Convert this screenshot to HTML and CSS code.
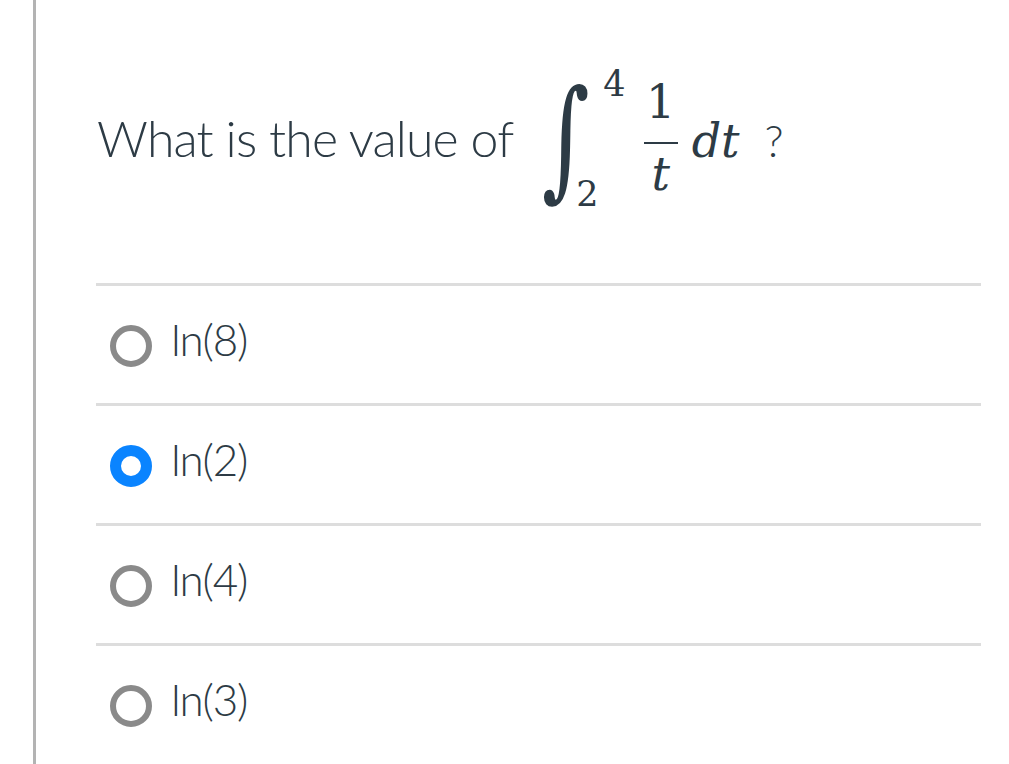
FILE: index.html
```html
<!DOCTYPE html>
<html lang="en">
<head>
<meta charset="utf-8">
<title>Quiz question</title>
<link rel="stylesheet" href="styles.css">
</head>
<body>
<div class="page">
  <div class="content">
    <div class="question">
      <span class="qtext">What is the value of</span>
      <span class="math">
        <span class="int-group">
          <span class="int-sign">∫</span>
          <span class="limits">
            <span class="sup">4</span>
            <span class="sub">2</span>
          </span>
        </span>
        <span class="frac">
          <span class="num">1</span>
          <span class="bar"></span>
          <span class="den">t</span>
        </span>
        <span class="dt">dt</span>
      </span>
      <span class="qmark">?</span>
    </div>
    <div class="answers">
      <label class="answer"><input type="radio" name="q1" class="radio"><span class="label">ln(8)</span></label>
      <label class="answer"><input type="radio" name="q1" class="radio" checked><span class="label">ln(2)</span></label>
      <label class="answer"><input type="radio" name="q1" class="radio"><span class="label">ln(4)</span></label>
      <label class="answer last"><input type="radio" name="q1" class="radio"><span class="label">ln(3)</span></label>
    </div>
  </div>
</div>
</body>
</html>
```

FILE: styles.css
```css
html, body {
  margin: 0;
  padding: 0;
  background: #ffffff;
}
body {
  font-family: Lato, "Open Sans", sans-serif;
  color: #2d3b45;
}
.page {
  margin-left: 33px;
  border-left: 3px solid #b3b3b3;
  min-height: 764px;
  box-sizing: border-box;
  padding-left: 60px;
  padding-right: 28px;
}
.question {
  display: flex;
  align-items: flex-start;
  height: 283px;
  padding-top: 60px;
  box-sizing: border-box;
}
.qtext {
  font-size: 50px;
  font-weight: 300;
  letter-spacing: -0.85px;
  line-height: 60px;
  margin-top: 48px;
  margin-left: 1px;
  white-space: nowrap;
}
.math {
  display: flex;
  align-items: flex-start;
  margin-left: 23px;
  font-family: "DejaVu Serif", "Liberation Serif", serif;
  color: #2d3b45;
}
.int-group {
  display: flex;
  align-items: flex-start;
}
.int-sign {
  font-family: "DejaVu Serif", serif;
  font-size: 135px;
  line-height: 130px;
  height: 130px;
  width: 36px;
  overflow: visible;
  white-space: nowrap;
  margin-top: 15px;
  display: block;
  flex: none;
  transform-origin: left top;
  transform: translate(6px, 0) scale(0.68, 0.97);
}
.limits {
  display: flex;
  flex-direction: column;
  justify-content: space-between;
  align-items: flex-start;
  height: 152px;
  margin-left: 31px;
}
.sup {
  font-size: 35px;
  line-height: 35px;
  margin-top: 7px;
}
.sub {
  font-size: 35px;
  line-height: 35px;
  margin-left: -27px;
}
.frac {
  display: flex;
  flex-direction: column;
  align-items: center;
  margin-left: 18px;
  margin-top: 19px;
}
.num {
  font-size: 46px;
  line-height: 46px;
  margin-bottom: 17px;
}
.bar {
  width: 34px;
  height: 2px;
  background: #2d3b45;
}
.den {
  font-style: italic;
  font-size: 46px;
  line-height: 46px;
  margin-top: 7px;
}
.dt {
  font-style: italic;
  font-size: 46px;
  line-height: 46px;
  margin-top: 58px;
  margin-left: 14px;
}
.qmark {
  font-size: 44px;
  font-weight: 300;
  line-height: 60px;
  margin-top: 50px;
  margin-left: 25px;
}
.answers {
  display: flex;
  flex-direction: column;
}
.answer {
  display: flex;
  align-items: center;
  height: 120px;
  border-top: 3px solid #dddddd;
  box-sizing: border-box;
  cursor: pointer;
}
.radio {
  appearance: none;
  -webkit-appearance: none;
  margin: 3px 0 0 14px;
  width: 42px;
  height: 42px;
  box-sizing: border-box;
  border: 6px solid #8a8a8a;
  border-radius: 50%;
  background: #ffffff;
  flex: none;
}
.radio:checked {
  border: 11px solid #0a84ff;
}
.label {
  font-size: 44px;
  font-weight: 300;
  letter-spacing: -1.2px;
  line-height: 44px;
  padding-bottom: 12px;
  margin-left: 19px;
}
```
